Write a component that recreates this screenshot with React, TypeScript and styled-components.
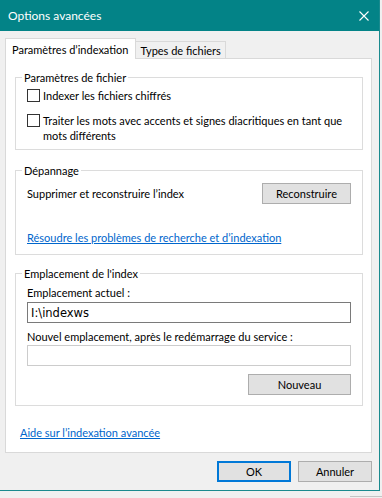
import styled, { createGlobalStyle } from 'styled-components';

const GlobalStyle = createGlobalStyle`
  html, body {
    margin: 0;
    padding: 0;
    background: #f0f0f0;
  }
  body {
    font-family: Lato, "Noto Sans", sans-serif;
    font-size: 11px;
    color: #000;
  }
`;

const Window = styled.div`
  width: 380px;
  box-sizing: border-box;
  border-right: 1px solid #1a8a8e;
  border-bottom: 1px solid #1a8a8e;
  background: #f0f0f0;
`;

const TitleBar = styled.div`
  height: 31px;
  background: #038387;
  color: #fff;
  display: flex;
  align-items: center;
  justify-content: space-between;
  padding: 0 10px 0 8px;
  font-size: 12px;
`;

const Body = styled.div`
  padding: 7px 7px 8px 5px;
`;

const TabRow = styled.div`
  display: flex;
  align-items: flex-end;
  height: 20px;
  position: relative;
  z-index: 1;
`;

const Tab = styled.div<{ $active?: boolean }>`
  box-sizing: border-box;
  border: 1px solid #d9d9d9;
  line-height: 15px;
  white-space: nowrap;
  ${(p) =>
    p.$active
      ? `
    height: 21px;
    margin-bottom: -1px;
    border-bottom: none;
    background: #fff;
    padding: 3px 7px 0 6px;
  `
      : `
    height: 17px;
    border-left: none;
    border-bottom: none;
    background: #f0f0f0;
    padding: 1px 4px 0 4px;
  `}
`;

const Panel = styled.div`
  box-sizing: border-box;
  height: 395px;
  background: #fff;
  border: 1px solid #d9d9d9;
  padding: 18px 8px 0 9px;
  display: flex;
  flex-direction: column;
`;

const Group = styled.div<{ $gap?: number }>`
  border: 1px solid #dcdcdc;
  display: flex;
  flex-direction: column;
  padding: 0 11px 0 11px;
  margin-top: ${(p) => p.$gap ?? 0}px;
`;

const GroupTitle = styled.div`
  align-self: flex-start;
  margin: -8px 0 0 -5px;
  padding: 0 2px;
  background: #fff;
  line-height: 15px;
`;

const CheckRow = styled.label<{ $top: number }>`
  display: flex;
  align-items: flex-start;
  gap: 3px;
  line-height: 15px;
  margin-top: ${(p) => p.$top}px;
`;

const Box = styled.span`
  flex: none;
  width: 13px;
  height: 13px;
  box-sizing: border-box;
  border: 1px solid #333;
  background: #fff;
  margin-top: 1px;
`;

const ActionRow = styled.div`
  display: flex;
  align-items: center;
  justify-content: space-between;
  margin-top: 5px;
`;

const Button = styled.button<{ $width: number; $default?: boolean }>`
  box-sizing: border-box;
  width: ${(p) => p.$width}px;
  height: 21px;
  padding: 0;
  font: inherit;
  color: #000;
  background: #e1e1e1;
  border: ${(p) => (p.$default ? '2px solid #0078d7' : '1px solid #adadad')};
`;

const Link = styled.a<{ $top: number; $left?: number }>`
  align-self: flex-start;
  line-height: 15px;
  color: #0066cc;
  text-decoration: underline;
  margin-top: ${(p) => p.$top}px;
  margin-left: ${(p) => p.$left ?? 0}px;
`;

const Label = styled.div<{ $top: number }>`
  line-height: 15px;
  margin-top: ${(p) => p.$top}px;
`;

const Field = styled.div<{ $top: number; $disabled?: boolean }>`
  box-sizing: border-box;
  height: 21px;
  margin-top: ${(p) => p.$top}px;
  border: 1px solid ${(p) => (p.$disabled ? '#cccccc' : '#7a7a7a')};
  background: #fff;
  padding: 0 3px;
  display: flex;
  align-items: center;
  font-family: "DejaVu Sans", sans-serif;
  font-size: 11.5px;
`;

const RightRow = styled.div<{ $top: number }>`
  display: flex;
  justify-content: flex-end;
  margin-top: ${(p) => p.$top}px;
`;

const DialogButtons = styled.div`
  display: flex;
  justify-content: flex-end;
  gap: 7px;
  margin-top: 8px;
`;

const Below = styled.div`
  height: 7px;
  display: flex;
  justify-content: flex-end;
`;

const BehindEdge = styled.div`
  width: 32px;
  margin-top: 5px;
  border-top: 1px solid #c4c4c4;
`;

const CloseIcon = () => (
  <svg width="10" height="10" viewBox="0 0 10 10">
    <path d="M0.5 0.5 L9.5 9.5 M9.5 0.5 L0.5 9.5" stroke="#fff" strokeWidth="1.1" />
  </svg>
);

export default function App() {
  return (
    <>
      <GlobalStyle />
      <Window>
        <TitleBar>
          <span>Options avancées</span>
          <CloseIcon />
        </TitleBar>
        <Body>
          <TabRow>
            <Tab $active>Paramètres d’indexation</Tab>
            <Tab>Types de fichiers</Tab>
          </TabRow>
          <Panel>
            <Group>
              <GroupTitle>Paramètres de fichier</GroupTitle>
              <CheckRow $top={3}>
                <Box />
                <span>Indexer les fichiers chiffrés</span>
              </CheckRow>
              <CheckRow $top={10} style={{ paddingBottom: 6 }}>
                <Box />
                <span>Traiter les mots avec accents et signes diacritiques en tant que mots différents</span>
              </CheckRow>
            </Group>
            <Group $gap={20}>
              <GroupTitle>Dépannage</GroupTitle>
              <ActionRow>
                <span>Supprimer et reconstruire l’index</span>
                <Button $width={89}>Reconstruire</Button>
              </ActionRow>
              <Link $top={26} style={{ marginBottom: 9 }}>
                Résoudre les problèmes de recherche et d’indexation
              </Link>
            </Group>
            <Group $gap={18}>
              <GroupTitle>Emplacement de l'index</GroupTitle>
              <Label $top={4}>Emplacement actuel :</Label>
              <Field $top={2}>I:\indexws</Field>
              <Label $top={6}>Nouvel emplacement, après le redémarrage du service :</Label>
              <Field $top={1} $disabled />
              <RightRow $top={8} style={{ paddingBottom: 10 }}>
                <Button $width={103}>Nouveau</Button>
              </RightRow>
            </Group>
            <Link $top={19} $left={5}>
              Aide sur l’indexation avancée
            </Link>
          </Panel>
          <DialogButtons>
            <Button $width={74} $default>OK</Button>
            <Button $width={74}>Annuler</Button>
          </DialogButtons>
        </Body>
      </Window>
      <Below>
        <BehindEdge />
      </Below>
    </>
  );
}
